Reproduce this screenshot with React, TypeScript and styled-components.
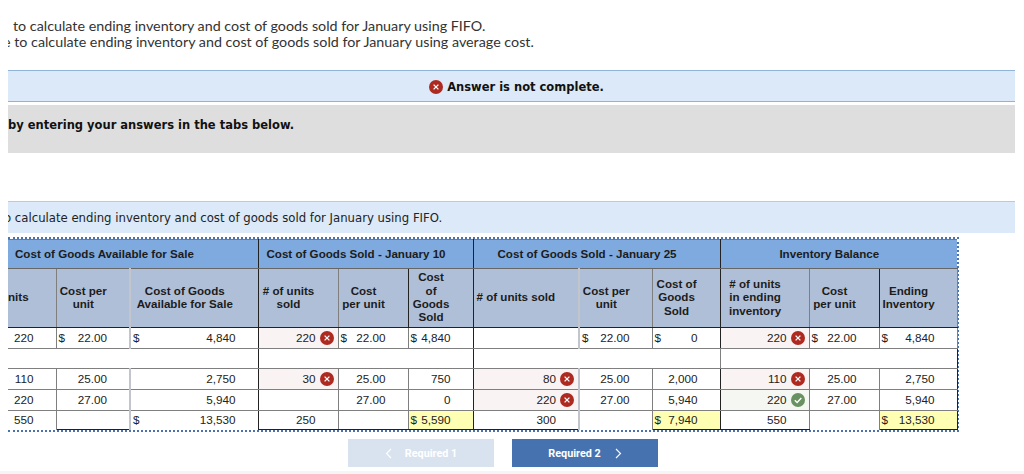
import { ReactNode } from "react";
import styled, { createGlobalStyle, css } from "styled-components";

const GlobalStyle = createGlobalStyle`
  html, body {
    margin: 0;
    padding: 0;
    background: #fff;
  }
`;

const Page = styled.div`
  width: 1024px;
  height: 474px;
  overflow: hidden;
  position: relative;
  font-family: "Liberation Sans", Arial, sans-serif;
`;

const Intro = styled.div`
  margin-left: 8px;
  padding-top: 18px;
  overflow: hidden;
  font-family: Lato, sans-serif;
  font-size: 14.3px;
  line-height: 16px;
  color: #333;
  white-space: nowrap;
`;

const IntroLine = styled.div<{ $indent: number }>`
  text-indent: ${(p) => p.$indent}px;
`;

const AnswerBar = styled.div`
  margin: 20px 9px 0 8px;
  height: 28px;
  display: flex;
  align-items: center;
  justify-content: center;
  gap: 4px;
  padding: 2px 0 0 10px;
  background: #dbe9f8;
  border-top: 1px solid #8fb4d9;
  border-bottom: 1px solid #8fb4d9;
  font-family: "DejaVu Sans", Verdana, sans-serif;
  font-size: 11.5px;
  font-weight: 700;
  color: #111;
`;

const GrayBar = styled.div`
  margin: 3px 9px 0 8px;
  height: 48px;
  box-sizing: border-box;
  padding-top: 13px;
  background: #dedede;
  font-family: "DejaVu Sans", Verdana, sans-serif;
  font-size: 11.5px;
  line-height: 14px;
  font-weight: 700;
  color: #111;
`;

const TaskBar = styled.div`
  margin: 48px 9px 0 8px;
  height: 32px;
  box-sizing: border-box;
  padding-top: 9px;
  overflow: hidden;
  white-space: nowrap;
  background: #dbe9f8;
  border-top: 1px solid #c4c8cc;
  font-family: "DejaVu Sans", Verdana, sans-serif;
  font-size: 11.7px;
  line-height: 14px;
  color: #222;
`;

const TaskText = styled.div`
  text-indent: -4px;
`;

const TableFrame = styled.div`
  width: 951px;
  margin: 4px 0 0 8px;
  box-sizing: border-box;
  border-top: 2px dotted #4a73ad;
  border-bottom: 2px dotted #4a73ad;
  border-right: 2px dotted #4a73ad;
`;

const Table = styled.table`
  width: 949px;
  table-layout: fixed;
  border-collapse: collapse;
  font-size: 11.7px;
  color: #222;
`;

const GroupHead = styled.th<{ $left?: boolean }>`
  height: 26px;
  padding: ${(p) => (p.$left ? "0 0 2px 7px" : "0 19px 2px 0")};
  background: #7faadf;
  border-right: 1px solid #222;
  border-top: 1px solid #777;
  border-bottom: 1px solid #666;
  text-align: ${(p) => (p.$left ? "left" : "center")};
  font-size: 11.6px;
  font-weight: 700;
  color: #1c1c1c;
  &:last-child {
    border-right: none;
  }
`;

type Edge = "black" | "gray" | "thick";

const edgeStyle = (edge: Edge = "gray") => {
  if (edge === "black") return "1px solid #222";
  if (edge === "thick") return "2px solid #c2c6cc";
  return "1px solid #7f7f7f";
};

const ColHead = styled.th<{ $edge?: Edge; $left?: boolean; $flush?: boolean }>`
  height: 56px;
  padding: ${(p) => (p.$flush ? "0 0 2px 0" : p.$left ? "0 0 2px 3px" : "0 19px 2px 0")};
  background: #b0bfd8;
  border-right: ${(p) => edgeStyle(p.$edge)};
  border-bottom: 1px solid #222;
  text-align: ${(p) => (p.$left || p.$flush ? "left" : "center")};
  font-size: 11.6px;
  line-height: 13.3px;
  font-weight: 700;
  color: #1c1c1c;
`;

const Cell = styled.td<{
  $edge?: Edge;
  $status?: "wrong" | "right";
  $total?: boolean;
  $under?: boolean;
  $yellow?: boolean;
}>`
  height: ${(p) => (p.$total ? "18px" : "20px")};
  padding: 0;
  background: ${(p) =>
    p.$yellow
      ? "#ffffb3"
      : p.$status === "wrong"
        ? "#f9f3f3"
        : p.$status === "right"
          ? "#f4f7f2"
          : "#fff"};
  border-right: ${(p) => edgeStyle(p.$edge)};
  border-bottom: ${(p) =>
    p.$total ? (p.$under ? "1px solid #222" : "1px solid transparent") : "1px solid #7f7f7f"};
  ${(p) =>
    p.$total &&
    css`
      border-top: 1px solid #222;
    `}
`;

const BlankCell = styled.td<{ $edge?: Edge }>`
  height: 19px;
  padding: 0;
  border-right: ${(p) => edgeStyle(p.$edge)};
  border-bottom: 1px solid #7f7f7f;
`;

const Value = styled.div`
  position: relative;
  display: flex;
  justify-content: space-between;
  align-items: center;
  padding: 0 22px 0 2px;
  line-height: 14px;
`;

const Amount = styled.span`
  margin-left: auto;
`;

const Mark = styled.svg`
  position: absolute;
  right: 4px;
  top: 0;
  width: 14px;
  height: 14px;
`;

const Footer = styled.div`
  display: flex;
  gap: 18px;
  margin: 7px 0 0 348px;
`;

const NavButton = styled.div<{ $disabled?: boolean }>`
  width: 146px;
  height: 28px;
  display: flex;
  align-items: center;
  justify-content: center;
  gap: ${(p) => (p.$disabled ? "13px" : "14px")};
  background: ${(p) => (p.$disabled ? "#d9e3ef" : "#4673b0")};
  color: #fff;
  font-family: Roboto, sans-serif;
  font-size: 10.8px;
  font-weight: 700;
`;

const Chevron = styled.svg`
  width: 7px;
  height: 11px;
`;

const BottomStrip = styled.div`
  position: absolute;
  left: 0;
  right: 0;
  bottom: 0;
  height: 3px;
  background: #f5f5f5;
`;

const WrongIcon = ({ size = 14 }: { size?: number }) => (
  <svg width={size} height={size} viewBox="0 0 14 14">
    <circle cx="7" cy="7" r="7" fill="#ae2a20" />
    <path d="M4.6 4.6l4.8 4.8M9.4 4.6l-4.8 4.8" stroke="#fff" strokeWidth="1.3" />
  </svg>
);

const StatusMark = ({ status }: { status: "wrong" | "right" }) => (
  <Mark viewBox="0 0 14 14">
    <circle cx="7" cy="7" r="7" fill={status === "wrong" ? "#ae2a20" : "#6a9161"} />
    {status === "wrong" ? (
      <path d="M4.6 4.6l4.8 4.8M9.4 4.6l-4.8 4.8" stroke="#fff" strokeWidth="1.3" />
    ) : (
      <path d="M3.8 7.2l2.3 2.2 4.2-4.4" stroke="#fff" strokeWidth="1.4" fill="none" />
    )}
  </Mark>
);

type DataProps = {
  children?: ReactNode;
  money?: boolean;
  edge?: Edge;
  status?: "wrong" | "right";
  total?: boolean;
  under?: boolean;
  yellow?: boolean;
};

const Data = ({ children, money, edge, status, total, under, yellow }: DataProps) => (
  <Cell $edge={edge} $status={status} $total={total} $under={under} $yellow={yellow}>
    <Value>
      {money && <span>$</span>}
      <Amount>{children}</Amount>
      {status && <StatusMark status={status} />}
    </Value>
  </Cell>
);

const widths = [48, 74, 128, 80, 70, 65, 106, 73, 68, 89, 70, 78];

const App = () => {
  return (
    <Page>
      <GlobalStyle />
      <Intro>
        <IntroLine $indent={5}>
          to calculate ending inventory and cost of goods sold for January using FIFO.
        </IntroLine>
        <IntroLine $indent={-5}>
          e to calculate ending inventory and cost of goods sold for January using average cost.
        </IntroLine>
      </Intro>

      <AnswerBar>
        <WrongIcon />
        Answer is not complete.
      </AnswerBar>
      <GrayBar>by entering your answers in the tabs below.</GrayBar>
      <TaskBar>
        <TaskText>o calculate ending inventory and cost of goods sold for January using FIFO.</TaskText>
      </TaskBar>

      <TableFrame>
        <Table>
          <colgroup>
            {widths.map((w, i) => (
              <col key={i} style={{ width: w }} />
            ))}
          </colgroup>
          <thead>
            <tr>
              <GroupHead colSpan={3} $left>
                Cost of Goods Available for Sale
              </GroupHead>
              <GroupHead colSpan={3}>Cost of Goods Sold - January 10</GroupHead>
              <GroupHead colSpan={3}>Cost of Goods Sold - January 25</GroupHead>
              <GroupHead colSpan={3}>Inventory Balance</GroupHead>
            </tr>
            <tr>
              <ColHead $flush>nits</ColHead>
              <ColHead $edge="thick">
                Cost per
                <br />
                unit
              </ColHead>
              <ColHead $edge="black">
                Cost of Goods
                <br />
                Available for Sale
              </ColHead>
              <ColHead>
                # of units
                <br />
                sold
              </ColHead>
              <ColHead $edge="black">
                Cost
                <br />
                per unit
              </ColHead>
              <ColHead $edge="black">
                Cost
                <br />
                of
                <br />
                Goods
                <br />
                Sold
              </ColHead>
              <ColHead $edge="thick" $left>
                # of units sold
              </ColHead>
              <ColHead>
                Cost per
                <br />
                unit
              </ColHead>
              <ColHead $edge="black">
                Cost of
                <br />
                Goods
                <br />
                Sold
              </ColHead>
              <ColHead>
                # of units
                <br />
                in ending
                <br />
                inventory
              </ColHead>
              <ColHead $edge="black">
                Cost
                <br />
                per unit
              </ColHead>
              <ColHead>
                Ending
                <br />
                Inventory
              </ColHead>
            </tr>
          </thead>
          <tbody>
            <tr>
              <Data>220</Data>
              <Data money edge="thick">22.00</Data>
              <Data money edge="black">4,840</Data>
              <Data status="wrong">220</Data>
              <Data money>22.00</Data>
              <Data money edge="black">4,840</Data>
              <Data edge="thick" />
              <Data money>22.00</Data>
              <Data money edge="black">0</Data>
              <Data status="wrong">220</Data>
              <Data money>22.00</Data>
              <Data money edge="gray">4,840</Data>
            </tr>
            <tr>
              <BlankCell colSpan={3} $edge="black" />
              <BlankCell colSpan={3} $edge="black" />
              <BlankCell colSpan={3} $edge="gray" />
              <BlankCell colSpan={3} $edge="black" />
            </tr>
            <tr>
              <Data>110</Data>
              <Data edge="thick">25.00</Data>
              <Data edge="black">2,750</Data>
              <Data status="wrong">30</Data>
              <Data>25.00</Data>
              <Data edge="black">750</Data>
              <Data edge="thick" status="wrong">80</Data>
              <Data>25.00</Data>
              <Data edge="black">2,000</Data>
              <Data status="wrong">110</Data>
              <Data>25.00</Data>
              <Data edge="black">2,750</Data>
            </tr>
            <tr>
              <Data>220</Data>
              <Data edge="thick">27.00</Data>
              <Data edge="black">5,940</Data>
              <Data />
              <Data>27.00</Data>
              <Data edge="black">0</Data>
              <Data edge="thick" status="wrong">220</Data>
              <Data>27.00</Data>
              <Data edge="black">5,940</Data>
              <Data status="right">220</Data>
              <Data>27.00</Data>
              <Data edge="black">5,940</Data>
            </tr>
            <tr>
              <Data total>550</Data>
              <Data total under edge="thick" />
              <Data total money edge="black">13,530</Data>
              <Data total under>250</Data>
              <Data total under />
              <Data total under money yellow edge="black">5,590</Data>
              <Data total under edge="thick">300</Data>
              <Data total />
              <Data total under money yellow edge="black">7,940</Data>
              <Data total under>550</Data>
              <Data total />
              <Data total under money yellow edge="black">13,530</Data>
            </tr>
          </tbody>
        </Table>
      </TableFrame>

      <Footer>
        <NavButton $disabled>
          <Chevron viewBox="0 0 7 11">
            <path d="M6 1L1.5 5.5 6 10" stroke="#fff" strokeWidth="1.1" fill="none" />
          </Chevron>
          Required 1
        </NavButton>
        <NavButton>
          Required 2
          <Chevron viewBox="0 0 7 11">
            <path d="M1 1l4.5 4.5L1 10" stroke="#fff" strokeWidth="1.1" fill="none" />
          </Chevron>
        </NavButton>
      </Footer>
      <BottomStrip />
    </Page>
  );
};

export default App;
